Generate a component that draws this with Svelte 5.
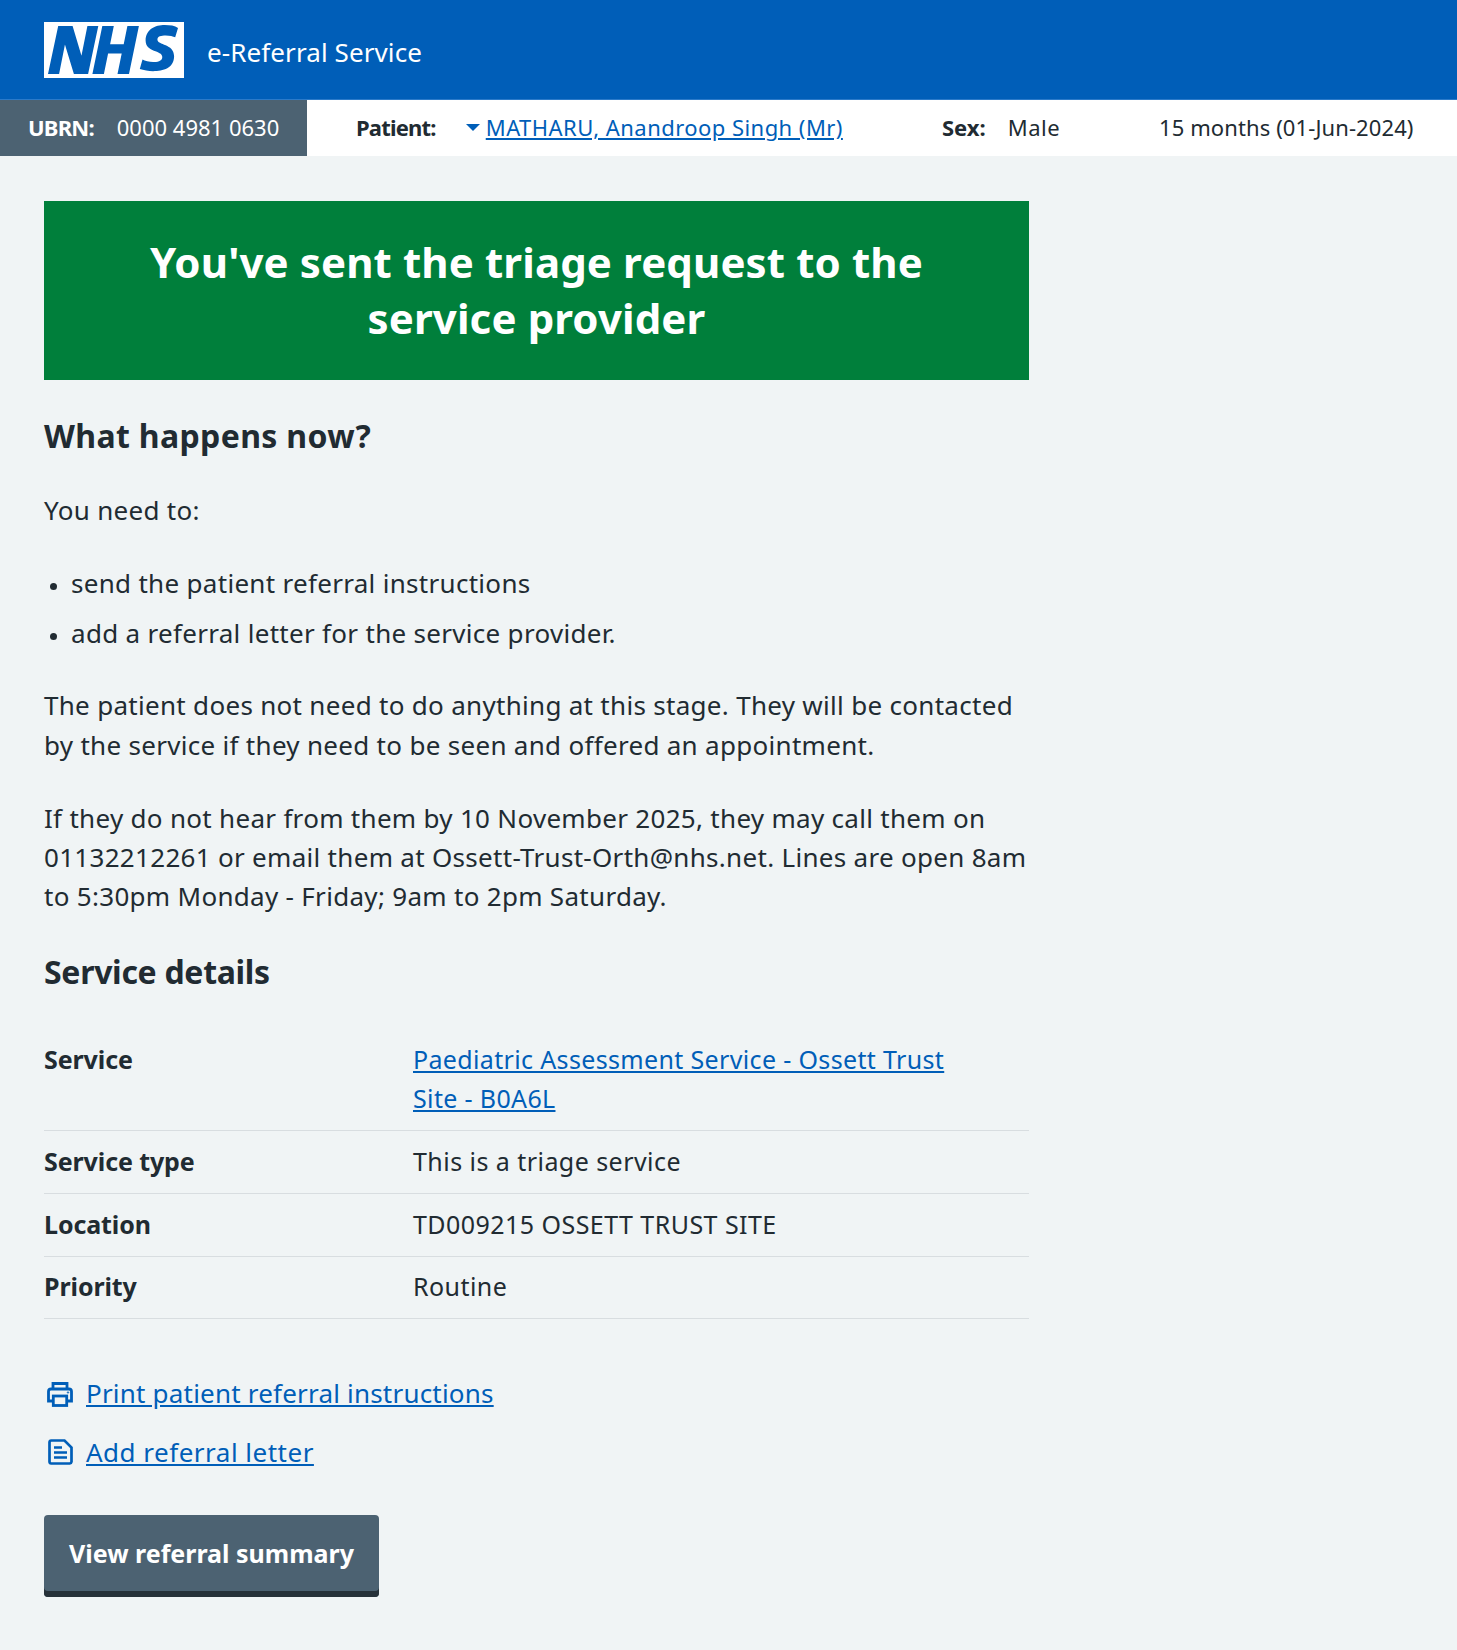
<script>
  const rows = [
    { label: 'Service type', value: 'This is a triage service' },
    { label: 'Location', value: 'TD009215 OSSETT TRUST SITE' },
    { label: 'Priority', value: 'Routine' }
  ];
</script>

<header class="top">
  <svg class="logo" viewBox="0 0 140 56" aria-label="NHS">
    <rect width="140" height="56" fill="#fff" />
    <path fill="#005eb8" d="M14.2 4h14.4l8.800 29.600h.1L43.400 4h10.900l-10.200 48H29.900L21 22.700h-.1L15.100 52H4z" />
    <path fill="#005eb8" d="M58.300 4h11.500l-3.700 18.200h13.600L83.400 4h11.500l-9.900 48H73.500l4.200-20.500H64.100L59.900 52H48.400z" />
    <path fill="#005eb8" d="M134 6l-2.800 9.300c-2.200-1-5.300-1.900-9.500-1.900-4.600 0-8.300.7-8.300 4.100 0 6.100 16.700 3.800 16.700 16.800 0 11.800-11 14.900-21 14.900-4.400 0-9.500-1-13.300-2.200l2.700-9.500c2.300 1.500 6.900 2.500 10.600 2.500 3.600 0 9.200-.7 9.200-5.100 0-6.900-16.700-4.300-16.700-16.400C101.600 7.400 111.300 3 120.700 3c5.300 0 10.200.6 13.300 3z" />
  </svg>
  <span class="service-name">e-Referral Service</span>
</header>

<section class="patient-bar">
  <div class="ubrn"><strong>UBRN:</strong><span>0000 4981 0630</span></div>
  <div class="patient">
    <strong>Patient:</strong>
    <span class="caret"></span>
    <a href="#patient">MATHARU, Anandroop Singh (Mr)</a>
  </div>
  <div class="sex"><strong>Sex:</strong><span>Male</span></div>
  <div class="age">15 months (01-Jun-2024)</div>
</section>

<main>
  <div class="panel">
    <h1>You've sent the triage request to the service provider</h1>
  </div>

  <h2 class="first">What happens now?</h2>
  <p class="intro">You need to:</p>
  <ul>
    <li>send the patient referral instructions</li>
    <li>add a referral letter for the service provider.</li>
  </ul>
  <p>The patient does not need to do anything at this stage. They will be contacted by the service if they need to be seen and offered an appointment.</p>
  <p>If they do not hear from them by 10 November 2025, they may call them on 01132212261 or email them at Ossett-Trust-Orth@nhs.net. Lines are open 8am to 5:30pm Monday - Friday; 9am to 2pm Saturday.</p>

  <h2 class="second">Service details</h2>
  <dl>
    <div class="row">
      <dt>Service</dt>
      <dd><a href="#service">Paediatric Assessment Service - Ossett Trust Site - B0A6L</a></dd>
    </div>
    {#each rows as row}
      <div class="row">
        <dt>{row.label}</dt>
        <dd>{row.value}</dd>
      </div>
    {/each}
  </dl>

  <div class="action first-action">
    <svg viewBox="0 0 28 26" class="icon" fill="none" stroke="#005eb8" stroke-width="2.800">
      <path d="M7 8V2.500h14V8" />
      <path d="M7 20H2.500V10.500a2.500 2.500 0 0 1 2.500-2.500h18a2.500 2.500 0 0 1 2.500 2.500V20H21" />
      <rect x="7.300" y="15" width="13.400" height="9.500" />
      <circle cx="22" cy="11.500" r="0.700" stroke-width="1" />
    </svg>
    <a href="#print">Print patient referral instructions</a>
  </div>
  <div class="action second-action">
    <svg viewBox="0 0 28 26" class="icon" fill="none" stroke="#005eb8" stroke-width="2.700">
      <g transform="translate(1 0)">
        <path d="M4.200 1.500h13.300l7 7v14.300a2 2 0 0 1-1.800 1.700H4.200a1.800 1.800 0 0 1-1.700-1.700V3.200a1.800 1.800 0 0 1 1.700-1.700z" />
        <path d="M7 8.500h8M7 13.500h13M7 18.500h13" />
      </g>
    </svg>
    <a href="#letter">Add referral letter</a>
  </div>

  <button type="button">View referral summary</button>
</main>

<style>
  :global(body) {
    margin: 0;
    background: #f0f4f5;
    color: #212b32;
    font-family: "Noto Sans", "Open Sans", sans-serif;
    font-size: 26px;
    line-height: 39.250px;
    letter-spacing: 0.3px;
  }
  .top {
    display: flex;
    align-items: center;
    gap: 23px;
    height: 99px;
    padding-left: 44px;
    background: #005eb8;
    border-bottom: 1px solid #2b7ac9;
    color: #fff;
  }
  .logo { width: 140px; height: 56px; }
  .service-name { font-size: 26px; letter-spacing: 0.1px; margin-top: 6px; }
  .patient-bar {
    display: flex;
    align-items: center;
    height: 56px;
    background: #fff;
    font-size: 22px;
    line-height: 54px;
    letter-spacing: 0;
  }
  .patient-bar strong { letter-spacing: -0.8px; }
  .ubrn {
    display: flex;
    align-items: center;
    gap: 23px;
    box-sizing: border-box;
    width: 307px;
    height: 100%;
    padding: 0 0 2px 28px;
    background: #4c6272;
    color: #fff;
  }
  .patient { display: flex; align-items: center; margin: 0 0 2px 49px; width: 586px; }
  .caret {
    margin-left: 30px;
    margin-right: 6px;
    border-left: 7px solid transparent;
    border-right: 7px solid transparent;
    border-top: 7px solid #005eb8;
  }
  .patient a { letter-spacing: 0.45px; }
  .sex { display: flex; gap: 22px; width: 217px; margin-bottom: 2px; }
  .patient-bar .sex strong { letter-spacing: 0; }
  .sex span { letter-spacing: 0.5px; }
  .age { letter-spacing: 0.1px; margin-bottom: 2px; }
  a { color: #005eb8; text-decoration: underline; }
  main { padding: 45px 0 0 44px; width: 985px; }
  .panel {
    box-sizing: border-box;
    height: 179px;
    padding: 32.500px 60px 0;
    background: #007f3b;
    color: #fff;
    text-align: center;
  }
  h1 { margin: 0; font-size: 42px; line-height: 56px; font-weight: 700; letter-spacing: 0.12px; }
  h2 { margin: 0; font-size: 32px; line-height: 40px; font-weight: 700; }
  h2.first { margin-top: 36px; margin-bottom: 35px; letter-spacing: 0.35px; }
  h2.second { margin-top: 35px; margin-bottom: 47px; letter-spacing: -0.3px; }
  p { margin: 0 0 34px; }
  p.intro { margin-bottom: 34px; }
  ul { margin: 0 0 33px; padding-left: 27px; }
  li { margin-bottom: 10.500px; }
  li:last-child { margin-bottom: 0; }
  li::marker { font-size: 21px; }
  dl { margin: 0; font-size: 25px; line-height: 39px; }
  .row {
    display: grid;
    grid-template-columns: 369px 1fr;
    border-bottom: 1px solid #d8dde0;
    padding: 10.900px 0 11.900px;
  }
  .row:first-child { padding-top: 1px; padding-bottom: 12.500px; }
  dt { font-weight: 700; letter-spacing: -0.1px; }
  dd { margin: 0; padding-right: 70px; letter-spacing: 0.45px; }
  dd a { letter-spacing: 0.35px; }
  .action { display: flex; align-items: center; gap: 12px; margin-top: 19px; }
  .first-action { margin-top: 55px; }
  .first-action a { letter-spacing: 0.2px; }
  .second-action a { letter-spacing: 0.5px; }
  .icon { width: 28px; height: 26px; margin-left: 2px; flex: none; }
  button {
    display: block;
    margin-top: 43px;
    padding: 13px 25px 18px;
    height: 82px;
    border: 0;
    border-radius: 4px;
    background: #4c6272;
    box-shadow: inset 0 -6px 0 #263139;
    color: #fff;
    font: inherit;
    font-size: 25px;
    letter-spacing: 0;
    font-weight: 700;
  }
</style>
